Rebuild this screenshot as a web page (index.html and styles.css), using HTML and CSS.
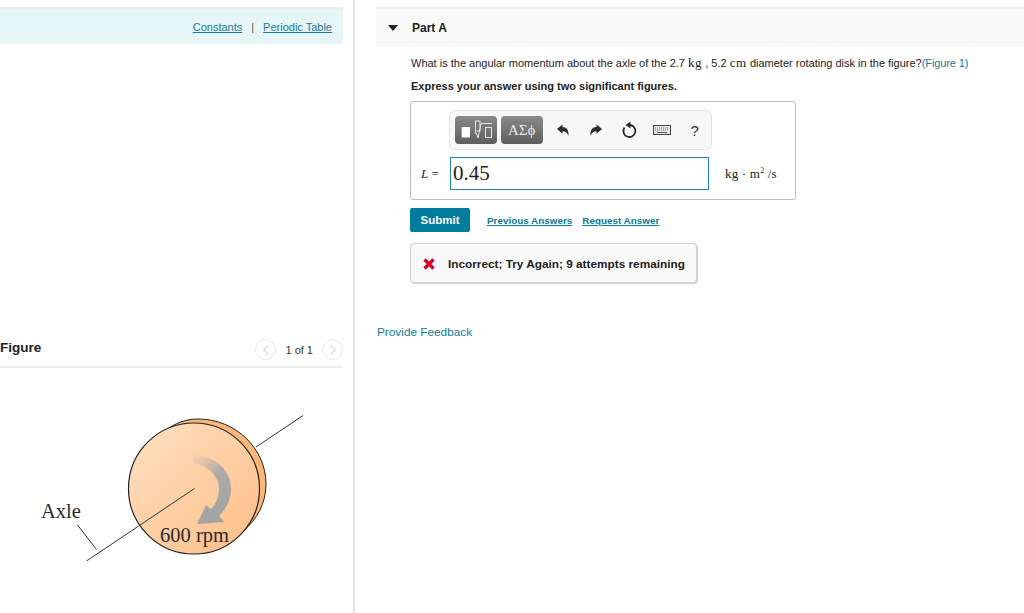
FILE: index.html
```html
<!DOCTYPE html>
<html lang="en">
<head>
    <meta charset="UTF-8">
    <title>Part A</title>
    <link rel="stylesheet" href="styles.css">
</head>
<body>
    <div class="page">
        <div class="left-col">
            <div class="tools-bar">
                <a href="#">Constants</a>
                <span class="sep">|</span>
                <a href="#">Periodic Table</a>
            </div>
            <div class="figure-head">
                <h2>Figure</h2>
                <div class="pager">
                    <span class="pager-btn">
                        <svg width="8" height="10" viewBox="0 0 8 10"><path d="M6.500 .5 L1.500 5 L6.500 9.500" /></svg>
                    </span>
                    <span class="pager-text">1 of 1</span>
                    <span class="pager-btn">
                        <svg width="8" height="10" viewBox="0 0 8 10"><path d="M1.500 .5 L6.500 5 L1.500 9.500" /></svg>
                    </span>
                </div>
            </div>
            <svg class="disk" width="343" height="220" viewBox="0 368 343 220">
                <defs>
                    <linearGradient id="face" x1="0" y1="0" x2="1" y2="1">
                        <stop offset="0" stop-color="#ffe1c4" />
                        <stop offset="1" stop-color="#fdbd85" />
                    </linearGradient>
                    <linearGradient id="turn" x1="0" y1="0" x2="0.4" y2="1">
                        <stop offset="0" stop-color="#b5b0aa" stop-opacity="0" />
                        <stop offset="0.45" stop-color="#aeaba8" />
                        <stop offset="1" stop-color="#a3a3a3" />
                    </linearGradient>
                </defs>
                <line class="thin" x1="303" y1="415.500" x2="256" y2="447" />
                <path class="back" d="M163 432 C175 423 186 419 198 419 C236 419 266 449 266 484 C266 503 257 520 243 531 Z" />
                <circle class="front" cx="194" cy="488.500" r="65.500" fill="url(#face)" />
                <path fill="url(#turn)" d="M193 455 C215 455 231 470 231 489 C231 500 226 509 219 516 L224 522 L197 524 L206 505 L211 509 C216 504 219 497 219 489 C219 476 208 465 193 463 Z" />
                <line class="thin" x1="194.500" y1="488.500" x2="86.500" y2="561" />
                <line class="thin" x1="77.500" y1="525" x2="96.500" y2="549.500" />
                <text x="41" y="518">Axle</text>
                <text x="160" y="542">600 rpm</text>
            </svg>
        </div>

        <div class="right-col">
            <div class="part-head">
                <span class="caret"></span>
                <span class="part-title">Part A</span>
            </div>
            <div class="part-body">
                <p class="question">What is the angular momentum about the axle of the 2.7 <span class="math">kg</span> , 5.2 <span class="math">cm</span> diameter rotating disk in the figure?<a href="#">(Figure 1)</a></p>
                <p class="instruction">Express your answer using two significant figures.</p>

                <div class="answer-box">
                    <div class="toolbar">
                        <span class="tool-btn">
                            <svg width="32" height="22" viewBox="0 0 32 22">
                                <rect x="1.700" y="8" width="8.300" height="10.500" fill="#fff" />
                                <g fill="none" stroke="#e6e6e6" stroke-width="1">
                                    <rect x="15.500" y="2" width="4.500" height="10" />
                                    <path d="M14.500 14 L16 13.500 L18 19 L21 4.500 L32 4.500" />
                                    <rect x="25.500" y="8.500" width="6" height="10" />
                                </g>
                            </svg>
                        </span>
                        <span class="tool-btn greek">ΑΣϕ</span>
                        <span class="tool-icon">
                            <svg width="14" height="13" viewBox="0 0 14 13"><path fill="#2c2c2c" d="M1 5 L6.500 .5 L6.500 3 C10.500 3 13 6 12.500 12 C11.500 9 9.500 7.300 6.500 7.300 L6.500 9.800 Z" /></svg>
                        </span>
                        <span class="tool-icon">
                            <svg width="14" height="13" viewBox="0 0 14 13"><path fill="#2c2c2c" d="M13 5 L7.500 .5 L7.500 3 C3.500 3 1 6 1.500 12 C2.500 9 4.500 7.300 7.500 7.300 L7.500 9.800 Z" /></svg>
                        </span>
                        <span class="tool-icon">
                            <svg width="16" height="18" viewBox="0 0 16 18">
                                <path fill="none" stroke="#2c2c2c" stroke-width="1.800" d="M3.500 6.500 A6 6 0 1 0 8 4" />
                                <path fill="#2c2c2c" d="M4.500 4 L9.500 .5 L9.500 7.500 Z" />
                            </svg>
                        </span>
                        <span class="tool-icon">
                            <svg width="18" height="10" viewBox="0 0 18 10">
                                <rect x=".5" y=".5" width="17" height="9" fill="#e8e8e8" stroke="#444" />
                                <path stroke="#666" stroke-width="1" stroke-dasharray="1 1" d="M2 3 L16 3 M2 5 L16 5" />
                                <path stroke="#555" stroke-width="1" d="M4 7.500 L14 7.500" />
                            </svg>
                        </span>
                        <span class="tool-icon help">?</span>
                    </div>
                    <div class="answer-row">
                        <span class="var"><i>L</i> =</span>
                        <div class="answer-input">0.45</div>
                        <span class="unit">kg · m<sup>2</sup> /s</span>
                    </div>
                </div>

                <div class="actions">
                    <button class="submit">Submit</button>
                    <a href="#">Previous Answers</a>
                    <a href="#">Request Answer</a>
                </div>

                <div class="feedback">
                    <svg width="12" height="12" viewBox="0 0 12 12"><path stroke="#d4002a" stroke-width="3.200" d="M1.500 1.500 L10.500 10.500 M10.500 1.500 L1.500 10.500" /></svg>
                    <span>Incorrect; Try Again; 9 attempts remaining</span>
                </div>
            </div>
            <a class="provide" href="#">Provide Feedback</a>
        </div>
    </div>
</body>
</html>
```
FILE: styles.css
```css
body {
    margin: 0;
    background: #fff;
    font-family: "Liberation Sans", Arial, sans-serif;
    color: #222;
    overflow: hidden;
}

a {
    color: #0f7a9c;
}

p {
    margin: 0;
}

.page {
    display: flex;
    height: 613px;
    padding-top: 7px;
    box-sizing: border-box;
}

/* left column */
.left-col {
    width: 343px;
    margin-right: 10px;
    flex: none;
}

.tools-bar {
    display: flex;
    justify-content: flex-end;
    align-items: center;
    gap: 9px;
    height: 37px;
    padding-right: 11px;
    box-sizing: border-box;
    border-top: 2px solid #ececec;
    background: #e6f5f6;
    font-size: 11px;
}

.tools-bar a {
    color: #1c7a9e;
}

.sep {
    color: #555;
}

.figure-head {
    display: flex;
    justify-content: space-between;
    align-items: flex-end;
    height: 46px;
    margin-top: 278px;
    padding-bottom: 6px;
    box-sizing: border-box;
    border-bottom: 2px solid #eee;
}

.figure-head h2 {
    margin: 0 0 5px;
    font-size: 13.500px;
}

.pager {
    display: flex;
    align-items: center;
    gap: 9px;
    font-size: 11px;
    color: #333;
}

.pager-btn {
    display: flex;
    align-items: center;
    justify-content: center;
    width: 21px;
    height: 21px;
    border: 1px solid #e6e6e6;
    border-radius: 50%;
    box-sizing: border-box;
}

.pager-btn path {
    fill: none;
    stroke: #c4c4c4;
}

.disk {
    display: block;
}

.disk text {
    font-family: "Liberation Serif", serif;
    font-size: 20.500px;
    fill: #2a2a2a;
}

.thin {
    stroke: #333;
    stroke-width: 1;
}

.back {
    fill: #fdb679;
    stroke: #222;
    stroke-width: 1;
}

.front {
    stroke: #222;
    stroke-width: 1.200;
}

/* right column */
.right-col {
    flex: 1;
    padding-left: 21px;
    border-left: 2px solid #d9e6f0;
    margin-top: -7px;
    padding-top: 7px;
}

.part-head {
    display: flex;
    align-items: center;
    height: 40px;
    padding-left: 12px;
    box-sizing: border-box;
    border-top: 2px solid #ececec;
    background: #f9f9f9;
}

.caret {
    width: 0;
    height: 0;
    border-left: 5px solid transparent;
    border-right: 5px solid transparent;
    border-top: 6px solid #222;
}

.part-title {
    margin-left: 14px;
    font-size: 12px;
    font-weight: bold;
}

.part-body {
    padding: 8px 0 0 35px;
    font-size: 11px;
}

.math {
    font-family: "Liberation Serif", serif;
    font-size: 13px;
    letter-spacing: 0.6px;
}

.question a {
    text-decoration: none;
    letter-spacing: -0.1px;
}

.instruction {
    margin-top: 9px;
    font-weight: bold;
}

.answer-box {
    width: 386px;
    height: 99px;
    margin: 9px 0 0 -1px;
    box-sizing: border-box;
    border: 1px solid #bbb;
    border-radius: 3px;
    padding: 8px 0 0 38px;
}

.toolbar {
    display: flex;
    align-items: center;
    width: 263px;
    height: 40px;
    padding-left: 5px;
    box-sizing: border-box;
    background: #f7f7f7;
    border: 1px solid #e2e2e2;
    border-radius: 6px;
}

.tool-btn {
    display: flex;
    align-items: center;
    justify-content: center;
    width: 42px;
    height: 28px;
    margin-right: 4px;
    border-radius: 4px;
    background: linear-gradient(#8a8a8a, #5e5e5e);
    color: #e8e8e8;
    font-family: "Liberation Serif", serif;
    font-size: 15px;
}

.tool-icon {
    display: flex;
    justify-content: center;
    width: 33px;
    color: #333;
}

.tool-icon.help {
    font-size: 15px;
}

.answer-row {
    display: flex;
    align-items: center;
    margin: 7px 0 0 -30px;
}

.var {
    width: 31px;
    padding-left: 2px;
    box-sizing: border-box;
    font-family: "Liberation Serif", serif;
    font-size: 13px;
}

.answer-input {
    width: 259px;
    height: 33px;
    box-sizing: border-box;
    border: 1px solid #1c8ab0;
    padding-left: 2px;
    font-family: "Liberation Serif", serif;
    font-size: 21px;
    line-height: 30px;
    color: #222;
}

.unit {
    margin-left: 16px;
    font-family: "Liberation Serif", serif;
    font-size: 13px;
    letter-spacing: 0.2px;
    white-space: nowrap;
}

.unit sup {
    font-size: 8px;
    line-height: 0;
}

.actions {
    display: flex;
    align-items: center;
    gap: 10px;
    margin: 8px 0 0 -1px;
}

.actions a {
    font-size: 9.900px;
    font-weight: bold;
}

.submit {
    width: 60px;
    height: 24px;
    margin-right: 7px;
    border: none;
    border-radius: 2px;
    background: #007c9e;
    color: #fff;
    font-family: "Liberation Sans", Arial, sans-serif;
    font-size: 11.500px;
    font-weight: bold;
}

.feedback {
    display: inline-flex;
    align-items: center;
    gap: 13px;
    width: 287px;
    height: 40px;
    margin: 11px 0 0 -1px;
    padding: 2px 0 0 12px;
    box-sizing: border-box;
    border: 1px solid #d0d0d0;
    border-radius: 4px;
    background: #f9f9f9;
    box-shadow: 1px 1px 1px #ccc;
    font-size: 11.800px;
    font-weight: bold;
    white-space: nowrap;
}

.provide {
    display: block;
    margin: 42px 0 0 1px;
    font-size: 11.800px;
    text-decoration: none;
}
```
